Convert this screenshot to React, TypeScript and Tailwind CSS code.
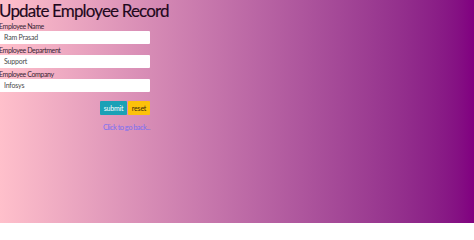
import React from "react";

export default function App() {
  return (
    <div
      className="w-[474px] h-[223px] bg-gradient-to-r from-[#ffc0cb] to-[#800080] overflow-hidden"
      style={{ fontFamily: 'Lato, "Noto Sans", sans-serif' }}
    >
      <div className="w-[151px] -ml-[1px]">
        <h1 className="text-[17px] leading-[21px] text-[#22081c] m-0 whitespace-nowrap font-normal tracking-[-0.85px] [-webkit-text-stroke:0.15px_#22081c]">
          Update Employee Record
        </h1>
        <form className="flex flex-col">
          <label className="text-[7px] leading-[10px] text-[#3a2434] tracking-[-0.4px]">Employee Name</label>
          <div className="h-[13px] bg-white rounded-[1px] flex items-center pl-[5px] text-[7px] text-[#4a4a4a] tracking-[-0.2px]">Ram Prasad</div>
          <label className="text-[7px] leading-[10px] text-[#3a2434] mt-[1px] tracking-[-0.4px]">Employee Department</label>
          <div className="h-[13px] bg-white rounded-[1px] flex items-center pl-[5px] text-[7px] text-[#4a4a4a] tracking-[-0.2px]">Support</div>
          <label className="text-[7px] leading-[10px] text-[#3a2434] mt-[1px] tracking-[-0.4px]">Employee Company</label>
          <div className="h-[13px] bg-white rounded-[1px] flex items-center pl-[5px] text-[7px] text-[#4a4a4a] tracking-[-0.2px]">Infosys</div>
          <div className="flex justify-end gap-[1px] mt-[9px]">
            <button type="button" className="h-[14px] w-[27px] bg-[#1aa1b6] text-white text-[7px] rounded-[1px] flex items-center justify-center tracking-[-0.2px]">submit</button>
            <button type="button" className="h-[14px] w-[22px] bg-[#fcc10a] text-[#3a2a10] text-[7px] rounded-[1px] flex items-center justify-center tracking-[-0.2px]">reset</button>
          </div>
          <div className="flex justify-end mt-[8px]">
            <span className="text-[7.5px] leading-[9px] text-[#7a70f2] tracking-[-0.55px]">Click to go back...</span>
          </div>
        </form>
      </div>
    </div>
  );
}
